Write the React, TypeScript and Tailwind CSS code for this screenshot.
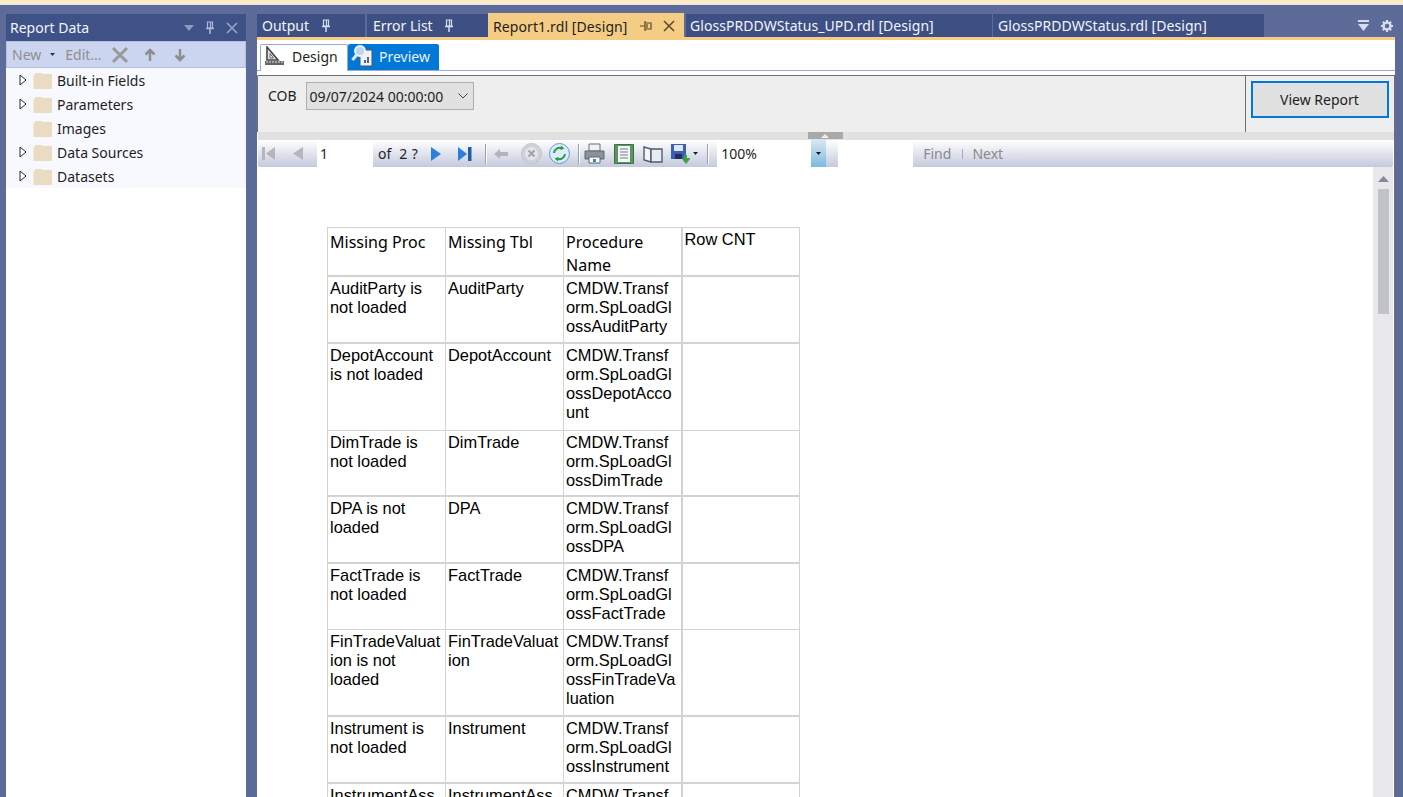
import { Fragment } from "react";

const ui = "font-['Noto_Sans','Open_Sans',sans-serif]";

const rows = [
  { h: 67, thick: true, a: ["AuditParty is", "not loaded"], b: ["AuditParty"], c: ["CMDW.Transf", "orm.SpLoadGl", "ossAuditParty"] },
  { h: 87, thick: false, a: ["DepotAccount", "is not loaded"], b: ["DepotAccount"], c: ["CMDW.Transf", "orm.SpLoadGl", "ossDepotAcco", "unt"] },
  { h: 66, thick: true, a: ["DimTrade is", "not loaded"], b: ["DimTrade"], c: ["CMDW.Transf", "orm.SpLoadGl", "ossDimTrade"] },
  { h: 67, thick: true, a: ["DPA is not", "loaded"], b: ["DPA"], c: ["CMDW.Transf", "orm.SpLoadGl", "ossDPA"] },
  { h: 66, thick: false, a: ["FactTrade is", "not loaded"], b: ["FactTrade"], c: ["CMDW.Transf", "orm.SpLoadGl", "ossFactTrade"] },
  { h: 87, thick: true, a: ["FinTradeValuat", "ion is not", "loaded"], b: ["FinTradeValuat", "ion"], c: ["CMDW.Transf", "orm.SpLoadGl", "ossFinTradeVa", "luation"] },
  { h: 67, thick: true, a: ["Instrument is", "not loaded"], b: ["Instrument"], c: ["CMDW.Transf", "orm.SpLoadGl", "ossInstrument"] },
  { h: 67, thick: false, a: ["InstrumentAss", "et is not", "loaded"], b: ["InstrumentAss", "et"], c: ["CMDW.Transf", "orm.SpLoadGl", "ossInstrumentAsset"] },
];

const tree = [
  { name: "Built-in Fields", arrow: true },
  { name: "Parameters", arrow: true },
  { name: "Images", arrow: false },
  { name: "Data Sources", arrow: true },
  { name: "Datasets", arrow: true },
];

function Lines({ items }: { items: string[] }) {
  return (
    <>
      {items.map((t, i) => (
        <Fragment key={i}>
          {t}
          {i < items.length - 1 && <br />}
        </Fragment>
      ))}
    </>
  );
}

function Pin({ color = "#d5dcf0" }: { color?: string }) {
  return (
    <svg width="10" height="13" viewBox="0 0 10 13">
      <path d="M2.5 1h5v6h-5zM5.5 1.500v5" fill="none" stroke={color} strokeWidth="1.200" />
      <path d="M1 7.500h8M5 8v5" stroke={color} strokeWidth="1.500" />
    </svg>
  );
}

function Folder() {
  return (
    <svg width="19" height="17" viewBox="0 0 19 17">
      <path d="M0 3h2V1h7v1h10v15H0z" fill="#eadcc3" />
      <path d="M0 3h1v14H0z" fill="#f1ead9" />
    </svg>
  );
}

function Triangle() {
  return (
    <svg width="8" height="12" viewBox="0 0 8 12">
      <path d="M1 1l6 5-6 5z" fill="#fff" stroke="#222" strokeWidth="1" />
    </svg>
  );
}

function DesignIcon() {
  return (
    <svg width="20" height="21" viewBox="0 0 20 21">
      <path d="M2 1l11 13H2z" fill="#e7e7e7" stroke="#444" strokeWidth="1.600" />
      <path d="M5 7.500l3.500 4.500H5z" fill="#fff" stroke="#666" />
      <path d="M0 15h19v4H0z" fill="#666" />
      <path d="M2 15v2M5 15v2M8 15v2M11 15v2M14 15v2M17 15v2" stroke="#ddd" />
    </svg>
  );
}

function PreviewIcon() {
  return (
    <svg width="22" height="22" viewBox="0 0 22 22">
      <path d="M9 5h12v16H9z" fill="#eef2f6" stroke="#4a5562" />
      <path d="M13 18v-3h2v3zM16 18v-6h2v6z" fill="#5b6673" />
      <circle cx="9" cy="6" r="5" fill="#bcd6ec" stroke="#eef2f6" strokeWidth="2" />
      <path d="M5.500 10l-4 5" stroke="#e8e8e8" strokeWidth="3" />
    </svg>
  );
}

function Sep() {
  return <div className="w-[2px] h-[20px] bg-[#9a9fb0] border-r border-white" />;
}

export default function App() {
  return (
    <div className={`${ui} w-full h-[797px] overflow-hidden bg-[#5d6b99] flex flex-col text-[14px]`}>
      <div className="h-[4px] bg-[#fdeac7] shrink-0" />
      <div className="h-px bg-[#e6e6ee] shrink-0" />
      <div className="flex-1 min-h-0 flex pt-[9px] pl-[6px] gap-[11px]">
        {/* Report Data panel */}
        <aside className="w-[240px] shrink-0 flex flex-col bg-white">
          <div className="h-[27px] bg-[#3e5287] flex items-center pl-[4px] pr-[8px] text-[#f2f4fa]">
            <span className="flex-1">Report Data</span>
            <svg width="10" height="6" viewBox="0 0 10 6" className="mr-[11px]">
              <path d="M0 0h10L5 6z" fill="#8e9ac0" />
            </svg>
            <div className="mr-[11px]">
              <Pin color="#aeb8d6" />
            </div>
            <svg width="12" height="12" viewBox="0 0 12 12">
              <path d="M1 1l10 10M11 1L1 11" stroke="#9aa6c8" strokeWidth="1.500" />
            </svg>
          </div>
          <div className="h-[27px] bg-[#ccd5f0] border border-[#b5c0de] flex items-center pl-[5px] text-[#8f8f8f]">
            <span>New</span>
            <svg width="5" height="3" viewBox="0 0 5 3" className="ml-[9px]">
              <path d="M0 0h5L2.500 3z" fill="#333" />
            </svg>
            <span className="ml-[10px]">Edit...</span>
            <svg width="18" height="18" viewBox="0 0 18 18" className="ml-[9px]">
              <path d="M2 2l14 14M16 2L2 16" stroke="#9a9a9a" strokeWidth="3" />
            </svg>
            <svg width="12" height="14" viewBox="0 0 12 14" className="ml-[15px]">
              <path d="M6 13V2M1.500 6.500L6 2l4.500 4.500" fill="none" stroke="#8d8d8d" strokeWidth="2.500" />
            </svg>
            <svg width="12" height="14" viewBox="0 0 12 14" className="ml-[18px]">
              <path d="M6 1v11M1.500 7.500L6 12l4.500-4.500" fill="none" stroke="#8d8d8d" strokeWidth="2.500" />
            </svg>
          </div>
          <ul className="bg-[#f8f9ff] text-[#1e1e1e]">
            {tree.map((item) => (
              <li key={item.name} className="h-[24px] flex items-center">
                <div className="w-[27px] pl-[13px] flex items-center">{item.arrow && <Triangle />}</div>
                <Folder />
                <span className="ml-[5px]">{item.name}</span>
              </li>
            ))}
          </ul>
        </aside>

        {/* Document well */}
        <section className="w-[1138px] shrink-0 flex flex-col min-h-0">
          <div className="h-[23px] flex text-[#f2f4fa] shrink-0">
            <div className="w-[108px] bg-[#3e5083] flex items-center pl-[5px] gap-[12px]">
              Output <Pin />
            </div>
            <div className="w-[121px] ml-[2px] bg-[#3e5083] flex items-center pl-[6px] gap-[11px]">
              Error List <Pin />
            </div>
            <div className="w-[196px] h-[26px] -mt-px bg-[#f5cc84] text-[#1e1e1e] flex items-center pl-[5px]">
              <span className="whitespace-nowrap tracking-[0.1px]">Report1.rdl [Design]</span>
              <svg width="13" height="10" viewBox="0 0 13 10" className="ml-[12px]">
                <path d="M0 5h5M5 0v10M5 2h6v6H5M7 3v4" fill="none" stroke="#5c4a25" strokeWidth="1.200" />
              </svg>
              <svg width="12" height="12" viewBox="0 0 12 12" className="ml-[10px]">
                <path d="M1 1l10 10M11 1L1 11" stroke="#5c4a25" strokeWidth="1.500" />
              </svg>
            </div>
            <div className="w-[306px] ml-[2px] bg-[#3e5083] flex items-center pl-[4px] whitespace-nowrap tracking-[0.06px]">
              GlossPRDDWStatus_UPD.rdl [Design]
            </div>
            <div className="w-[271px] ml-px bg-[#3e5083] flex items-center pl-[5px] whitespace-nowrap tracking-[0.06px]">
              GlossPRDDWStatus.rdl [Design]
            </div>
            <div className="flex-1 flex items-center justify-end pr-[2px] gap-[12px]">
              <svg width="11" height="13" viewBox="0 0 11 13">
                <path d="M0 1h11v2H0zM0 5h11L5.500 12z" fill="#d5dcf0" />
              </svg>
              <svg width="12" height="12" viewBox="0 0 12 12">
                <circle cx="6" cy="6" r="3.500" fill="none" stroke="#d5dcf0" strokeWidth="2.500" />
                <path d="M6 0v2.500M6 9.500V12M0 6h2.500M9.500 6H12M1.800 1.800l1.800 1.800M8.400 8.400l1.800 1.800M10.200 1.800L8.400 3.600M3.600 8.400l-1.800 1.800" stroke="#d5dcf0" strokeWidth="2" />
              </svg>
            </div>
          </div>
          <div className="h-[3px] bg-[#f5cc84] shrink-0" />

          <div className="flex-1 min-h-0 bg-white flex flex-col">
            {/* Design / Preview tabs */}
            <div className="h-[31px] shrink-0 flex items-end pl-[3px] border-b border-[#9aa9cc]">
              <div className="w-[88px] h-[27px] -mb-px bg-white border border-b-0 border-[#9aa9cc] rounded-t-[2px] flex items-center pl-[4px] pb-[3px] gap-[7px] text-[#1e1e1e]">
                <DesignIcon />
                Design
              </div>
              <div className="w-[91px] h-[26px] bg-[#0078d7] rounded-t-[2px] flex items-center pl-[3px] pb-[2px] gap-[6px] text-[#e8f2fb]">
                <PreviewIcon />
                Preview
              </div>
            </div>
            <div className="h-[4px] shrink-0" />

            <div className="flex-1 min-h-0 flex flex-col border-r border-t border-l border-[#6f6f6f] border-l-white">
              {/* Parameter area */}
              <div className="h-[56px] shrink-0 -ml-px border-l border-[#6f6f6f] bg-[#eeeeee] flex text-[#1e1e1e]">
                <div className="flex-1 flex items-start pl-[10px] pt-[6px] border-r border-[#6f6f6f]">
                  <span className="mt-[3px]">COB</span>
                  <div className="ml-[9px] w-[168px] h-[28px] bg-[#e1e1e1] border border-[#adadad] flex items-center pl-[3px]">
                    <span className="flex-1">09/07/2024 00:00:00</span>
                    <svg width="10" height="6" viewBox="0 0 10 6" className="mr-[5px]">
                      <path d="M0.500 0.500L5 5l4.500-4.500" fill="none" stroke="#444" />
                    </svg>
                  </div>
                </div>
                <div className="w-[148px] shrink-0 pl-[5px] pt-[5px]">
                  <div className="w-[138px] h-[37px] bg-[#e1e1e1] border-2 border-[#0078d7] flex items-center justify-center pr-[1px]">
                    View Report
                  </div>
                </div>
              </div>

              {/* Splitter */}
              <div className="h-[8px] shrink-0 bg-[#e1e1e1] flex justify-center">
                <div className="w-[35px] h-[7px] bg-[#a9a9a9] flex items-center justify-center -ml-[2px]">
                  <svg width="8" height="4" viewBox="0 0 8 4">
                    <path d="M0 4l4-4 4 4z" fill="#eee" />
                  </svg>
                </div>
              </div>

              {/* Report toolbar */}
              <div className="h-[27px] shrink-0 flex items-center mr-px rounded-b-[2px] bg-linear-to-b from-white to-[#c4cadd] text-[#1e1e1e]">
                <svg width="14" height="15" viewBox="0 0 14 15" className="ml-[4px]">
                  <path d="M0 1h3v13H0zM13 1v13L4 7.500z" fill="#b4b6bb" />
                </svg>
                <svg width="10" height="15" viewBox="0 0 10 15" className="ml-[17px]">
                  <path d="M10 1v13L0 7.500z" fill="#b4b6bb" />
                </svg>
                <div className="ml-[14px] w-[56px] h-[27px] bg-white flex items-center pl-[3px]">1</div>
                <span className="ml-[5px]">of</span>
                <span className="ml-[8px] tracking-[0.4px]">2 ?</span>
                <svg width="10" height="14" viewBox="0 0 10 14" className="ml-[13px]">
                  <path d="M0 0l10 7-10 7z" fill="#2f7fd8" />
                </svg>
                <svg width="14" height="14" viewBox="0 0 14 14" className="ml-[17px]">
                  <path d="M0 0l9 7-9 7z" fill="#2f7fd8" />
                  <path d="M10 0h3.500v14H10z" fill="#1f5fa8" />
                </svg>
                <div className="ml-[13px]">
                  <Sep />
                </div>
                <svg width="14" height="12" viewBox="0 0 14 12" className="ml-[7px]">
                  <path d="M0 6l6-5v3h8v4H6v3z" fill="#b2b4ba" />
                </svg>
                <svg width="21" height="21" viewBox="0 0 21 21" className="ml-[13px]">
                  <circle cx="10.500" cy="10.500" r="10" fill="#cfd1d8" stroke="#c0c2c9" />
                  <circle cx="10.500" cy="10.500" r="6.500" fill="#e4e5ea" />
                  <path d="M7.500 7.500l6 6M13.500 7.500l-6 6" stroke="#a0a2a8" strokeWidth="2" />
                </svg>
                <svg width="21" height="21" viewBox="0 0 21 21" className="ml-[7px]">
                  <circle cx="10.500" cy="10.500" r="10" fill="#dcecfa" stroke="#5b9bd8" />
                  <path d="M5 10a5.500 5.500 0 0 1 8-4.500M16 11a5.500 5.500 0 0 1-8 4.500" fill="none" stroke="#2f9a3e" strokeWidth="2" />
                  <path d="M12 2.500l3.500 3-4 1.500zM9 18.500l-3.500-3 4-1.500z" fill="#2f9a3e" />
                </svg>
                <div className="ml-[8px]">
                  <Sep />
                </div>
                <svg width="21" height="21" viewBox="0 0 21 21" className="ml-[4px]">
                  <path d="M5 1h11v7H5z" fill="#f2f2f2" stroke="#6b6f78" />
                  <path d="M1 8h19v8H1z" fill="#8b929e" stroke="#5f6670" />
                  <path d="M5 14h11v6H5z" fill="#fff" stroke="#5f6670" />
                  <path d="M9 16h3v3H9z" fill="#3f7fd0" />
                </svg>
                <svg width="20" height="20" viewBox="0 0 20 20" className="ml-[9px]">
                  <path d="M0.500 0.500h19v19h-19z" fill="#5b9460" stroke="#3f7045" />
                  <path d="M4 2h12v16H4z" fill="#f4f6fa" />
                  <path d="M6 5h8M6 8h8M6 11h8M6 14h8" stroke="#6f7c92" />
                </svg>
                <svg width="20" height="18" viewBox="0 0 20 18" className="ml-[9px]">
                  <path d="M1 2l7 2v13l-7-2z" fill="#f3f5f8" stroke="#555b66" strokeWidth="1.400" />
                  <path d="M8 4h11v13H8z" fill="#e4ecf6" stroke="#555b66" strokeWidth="1.400" />
                </svg>
                <svg width="20" height="20" viewBox="0 0 20 20" className="ml-[8px]">
                  <path d="M0 0h15v15H0z" fill="#3e5fb0" />
                  <path d="M3 1h9v6H3z" fill="#dfe6f5" />
                  <path d="M4 10h7v5H4z" fill="#1f2f60" />
                  <path d="M13 11h3v3h3v1l-4 5-4-5v-1h2z" fill="#3fa045" />
                </svg>
                <svg width="5" height="3" viewBox="0 0 5 3" className="ml-[2px]">
                  <path d="M0 0h5L2.500 3z" fill="#222" />
                </svg>
                <div className="ml-[9px]">
                  <Sep />
                </div>
                <div className="ml-[8px] w-[94px] h-[27px] bg-white flex items-center pl-[4px]">100%</div>
                <div className="w-[15px] h-[27px] bg-linear-to-b from-[#d6e8f4] to-[#7db9dd] flex items-center justify-center">
                  <svg width="5" height="3" viewBox="0 0 5 3">
                    <path d="M0 0h5L2.500 3z" fill="#111" />
                  </svg>
                </div>
                <div className="ml-[12px] w-[75px] h-[27px] bg-white" />
                <span className="ml-[10px] text-[#8a8a8a]">Find</span>
                <div className="ml-[11px] w-px h-[10px] bg-[#a9acb8]" />
                <span className="ml-[9px] text-[#8a8a8a]">Next</span>
              </div>

              {/* Report page */}
              <div className="flex-1 min-h-0 flex overflow-hidden bg-white">
                <div className="flex-1 min-w-0 pl-[69px] pt-[60px]">
                  <table className="w-[472px] table-fixed border-collapse font-['Liberation_Sans',Arial,sans-serif] text-[16.4px] leading-[19px] text-black">
                    <colgroup>
                      <col className="w-[118px]" />
                      <col className="w-[118px]" />
                      <col className="w-[118px]" />
                      <col className="w-[118px]" />
                    </colgroup>
                    <tbody>
                      <tr className="border-b-2 border-[#d3d3d3] align-top">
                        <td className={`${ui} border border-[#d3d3d3] pl-[2px] text-[16px] leading-[23px] whitespace-nowrap`}>
                          <div className="h-[47px] pt-[3px]">Missing Proc</div>
                        </td>
                        <td className={`${ui} border border-[#d3d3d3] pl-[2px] text-[16px] leading-[23px] whitespace-nowrap`}>
                          <div className="h-[47px] pt-[3px]">Missing Tbl</div>
                        </td>
                        <td className={`${ui} border border-[#d3d3d3] border-r-2 pl-[2px] text-[16px] leading-[23px] whitespace-nowrap`}>
                          <div className="h-[47px] pt-[3px]">
                            Procedure
                            <br />
                            Name
                          </div>
                        </td>
                        <td className="border border-[#d3d3d3] pl-[2px] pt-[2px]">Row CNT</td>
                      </tr>
                      {rows.map((row) => (
                        <tr
                          key={row.a[0]}
                          className={`align-top border-b border-[#d3d3d3] ${row.thick ? "border-b-2" : ""}`}
                          style={{ height: row.h }}
                        >
                          <td className="border-x border-[#d3d3d3] pl-[2px] pt-[2px] whitespace-nowrap overflow-hidden">
                            <Lines items={row.a} />
                          </td>
                          <td className="border-x border-[#d3d3d3] pl-[2px] pt-[2px] whitespace-nowrap overflow-hidden">
                            <Lines items={row.b} />
                          </td>
                          <td className="border-l border-r-2 border-[#d3d3d3] pl-[2px] pt-[2px] whitespace-nowrap overflow-hidden">
                            <Lines items={row.c} />
                          </td>
                          <td className="border-x border-[#d3d3d3]" />
                        </tr>
                      ))}
                    </tbody>
                  </table>
                </div>

                {/* Scrollbar */}
                <div className="w-[20px] shrink-0 bg-[#e8e8ec] flex flex-col items-center mr-px">
                  <svg width="11" height="6" viewBox="0 0 11 6" className="mt-[9px]">
                    <path d="M0 6L5.500 0 11 6z" fill="#868999" />
                  </svg>
                  <div className="w-[11px] h-[125px] mt-[7px] bg-[#c2c3c9]" />
                </div>
              </div>
            </div>
          </div>
        </section>
      </div>
    </div>
  );
}
